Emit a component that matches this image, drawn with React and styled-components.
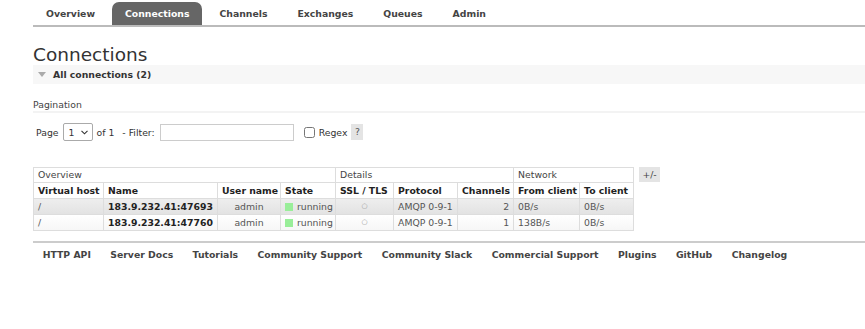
import styled, { createGlobalStyle } from "styled-components";

const GlobalStyle = createGlobalStyle`
  body {
    margin: 0;
    background: #fff;
    font-family: "DejaVu Sans", Verdana, sans-serif;
    font-size: 9.3px;
    color: #484848;
  }
`;

const Menu = styled.ul`
  display: flex;
  gap: 4px;
  margin: 0 0 0 33px;
  padding: 2px 0 0 0;
  height: 23px;
  list-style: none;
  border-bottom: 2px solid #bbb;
`;

const Tab = styled.li`
  padding: 0 13px;
  line-height: 23px;
  font-weight: bold;
  color: ${(p) => (p.$active ? "#fff" : "#444")};
  background: ${(p) => (p.$active ? "#666" : "transparent")};
  border-radius: 7px 7px 0 0;
`;

const Main = styled.div`
  padding-left: 33px;
`;

const Title = styled.h1`
  margin: 17px 0 0 0;
  font-size: 18.5px;
  line-height: 21px;
  font-weight: normal;
  color: #333;
`;

const SectionBar = styled.div`
  display: flex;
  align-items: center;
  gap: 6px;
  height: 19px;
  padding-left: 5px;
  background: #f7f7f7;
  font-weight: bold;
  color: #333;
`;

const Arrow = styled.span`
  width: 0;
  height: 0;
  border-left: 4px solid transparent;
  border-right: 4px solid transparent;
  border-top: 5px solid #aaa;
  margin-right: 1px;
`;

const SubHeading = styled.h3`
  margin: 14px 0 0 0;
  font-size: 9.3px;
  line-height: 13px;
  font-weight: normal;
  color: #444;
  border-bottom: 2px solid #f3f3f3;
`;

const Controls = styled.div`
  display: flex;
  align-items: center;
  gap: 4px;
  height: 18px;
  margin-top: 10px;
  padding-left: 3px;
  color: #333;
`;

const SelectWrap = styled.span`
  position: relative;
  display: inline-block;
  width: 30px;
  height: 18px;
`;

const Select = styled.select`
  appearance: none;
  width: 30px;
  height: 18px;
  font-family: inherit;
  font-size: 9.3px;
  color: #333;
  padding: 0 0 0 5px;
  border: 1px solid #aaa;
  border-radius: 2px;
  background: #fff;
`;

const Chevron = styled.svg`
  position: absolute;
  right: 5px;
  top: 7px;
  pointer-events: none;
`;

const FilterLabel = styled.span`
  margin-left: 4px;
`;

const FilterInput = styled.input`
  width: 128px;
  height: 13px;
  margin-left: 1px;
  border: 1px solid #ccc;
  padding: 1px 2px;
`;

const Check = styled.input`
  width: 11px;
  height: 11px;
  margin: 0 0 0 6px;
`;

const Help = styled.span`
  display: inline-block;
  width: 12px;
  line-height: 16px;
  text-align: center;
  background: #e4e4e4;
  color: #555;
`;

const TableRow = styled.div`
  display: flex;
  align-items: flex-start;
  gap: 5px;
  margin-top: 26px;
`;

const List = styled.table`
  border-collapse: collapse;
  table-layout: fixed;
  width: 600px;
`;

const Col = styled.col`
  width: ${(p) => p.$w}px;
`;

const GroupCell = styled.th`
  font-weight: normal;
  text-align: left;
  color: #444;
  padding: 0 4px;
  height: 14px;
  line-height: 14px;
  border: 1px solid #ddd;
  background: #fff;
`;

const HeadCell = styled.th`
  font-weight: bold;
  text-align: left;
  color: #222;
  padding: 0 4px;
  height: 15px;
  line-height: 15px;
  border: 1px solid #ddd;
  background: #fff;
  white-space: nowrap;
`;

const Row = styled.tr`
  background: ${(p) =>
    p.$alt
      ? "linear-gradient(#fff, #f6f6f6)"
      : "linear-gradient(#eee, #e2e2e2)"};
`;

const Cell = styled.td`
  padding: 0 4px;
  height: 15px;
  line-height: 15px;
  border: 1px solid #ddd;
  white-space: nowrap;
  overflow: hidden;
  text-align: ${(p) => p.$align || "left"};
  font-weight: ${(p) => (p.$bold ? "bold" : "normal")};
  color: ${(p) => (p.$bold ? "#222" : "#555")};
`;

const TlsMark = styled.span`
  display: inline-block;
  height: 15px;
  line-height: 15px;
  vertical-align: top;
  font-size: 7px;
  color: #999;
`;

const StateBox = styled.span`
  display: inline-block;
  width: 8px;
  height: 8px;
  margin-right: 4px;
  vertical-align: -1px;
  background: #99ee99;
`;

const Toggle = styled.span`
  display: inline-block;
  width: 21px;
  line-height: 15px;
  text-align: center;
  background: #e4e4e4;
  color: #444;
`;

const Footer = styled.ul`
  display: flex;
  margin: 10px 0 0 33px;
  padding: 5px 0 0 0;
  list-style: none;
  border-top: 2px solid #ccc;
`;

const FooterLink = styled.li`
  padding: 0 9.7px;
  line-height: 14px;
  font-weight: bold;
  color: #444;
`;

const tabs = ["Overview", "Connections", "Channels", "Exchanges", "Queues", "Admin"];

const connections = [
  { name: "183.9.232.41:47693", channels: 2, from: "0B/s", to: "0B/s" },
  { name: "183.9.232.41:47760", channels: 1, from: "138B/s", to: "0B/s" },
];

const footerLinks = [
  "HTTP API",
  "Server Docs",
  "Tutorials",
  "Community Support",
  "Community Slack",
  "Commercial Support",
  "Plugins",
  "GitHub",
  "Changelog",
];

const widths = [70, 114, 63, 55, 58, 64, 56, 66, 54];

const App = () => {
  return (
    <>
      <GlobalStyle />
      <Menu>
        {tabs.map((t) => (
          <Tab key={t} $active={t === "Connections"}>
            {t}
          </Tab>
        ))}
      </Menu>
      <Main>
        <Title>Connections</Title>
        <SectionBar>
          <Arrow />
          All connections (2)
        </SectionBar>
        <SubHeading>Pagination</SubHeading>
        <Controls>
          Page
          <SelectWrap>
            <Select defaultValue="1">
              <option value="1">1</option>
            </Select>
            <Chevron width="7" height="5" viewBox="0 0 7 5">
              <path d="M0.5 0.8 L3.5 3.8 L6.5 0.8" fill="none" stroke="#333" strokeWidth="1.1" />
            </Chevron>
          </SelectWrap>
          <span>of 1</span>
          <FilterLabel>- Filter:</FilterLabel>
          <FilterInput type="text" />
          <Check type="checkbox" />
          <span>Regex</span>
          <Help>?</Help>
        </Controls>
        <TableRow>
          <List>
            <colgroup>
              {widths.map((w, i) => (
                <Col key={i} $w={w} />
              ))}
            </colgroup>
            <thead>
              <tr>
                <GroupCell colSpan={4}>Overview</GroupCell>
                <GroupCell colSpan={3}>Details</GroupCell>
                <GroupCell colSpan={2}>Network</GroupCell>
              </tr>
              <tr>
                <HeadCell>Virtual host</HeadCell>
                <HeadCell>Name</HeadCell>
                <HeadCell>User name</HeadCell>
                <HeadCell>State</HeadCell>
                <HeadCell>SSL / TLS</HeadCell>
                <HeadCell>Protocol</HeadCell>
                <HeadCell>Channels</HeadCell>
                <HeadCell>From client</HeadCell>
                <HeadCell>To client</HeadCell>
              </tr>
            </thead>
            <tbody>
              {connections.map((c, i) => (
                <Row key={c.name} $alt={i % 2 === 1}>
                  <Cell>/</Cell>
                  <Cell $bold>{c.name}</Cell>
                  <Cell $align="center">admin</Cell>
                  <Cell>
                    <StateBox />
                    running
                  </Cell>
                  <Cell $align="center">
                    <TlsMark>○</TlsMark>
                  </Cell>
                  <Cell>AMQP 0-9-1</Cell>
                  <Cell $align="right">{c.channels}</Cell>
                  <Cell>{c.from}</Cell>
                  <Cell>{c.to}</Cell>
                </Row>
              ))}
            </tbody>
          </List>
          <Toggle>+/-</Toggle>
        </TableRow>
      </Main>
      <Footer>
        {footerLinks.map((l) => (
          <FooterLink key={l}>{l}</FooterLink>
        ))}
      </Footer>
    </>
  );
};

export default App;
